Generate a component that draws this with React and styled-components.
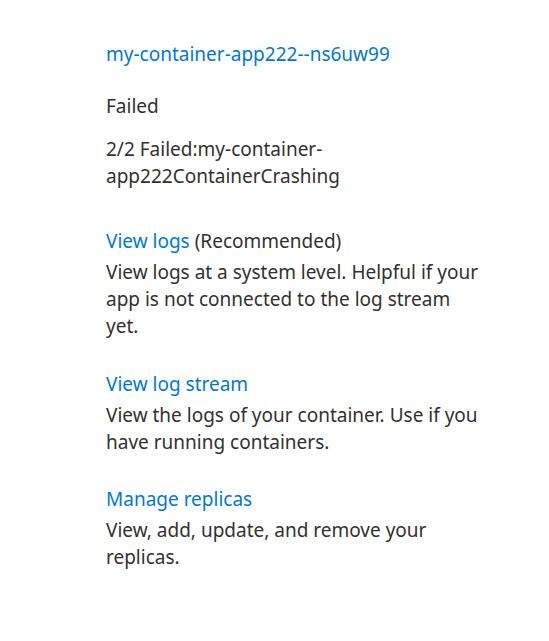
import React from "react";
import styled, { createGlobalStyle } from "styled-components";

const Global = createGlobalStyle`
  html, body { margin: 0; padding: 0; background: #ffffff; }
  body { font-family: "Noto Sans", "Open Sans", "Liberation Sans", sans-serif; }
`;

const Page = styled.div`
  padding: 41px 0 0 106px;
  width: 380px;
  color: #323130;
  font-size: 19px;
  line-height: 27px;
`;

const Link = styled.a`
  color: #0078d4;
  text-decoration: none;
  cursor: pointer;
`;

const Title = styled.div`
  margin: 0;
`;

const Status = styled.div`
  margin-top: ${(p) => p.$top}px;
`;

const Section = styled.div`
  display: flex;
  flex-direction: column;
  gap: 4px;
  margin-top: ${(p) => p.$top}px;
`;

const Heading = styled.div``;

const Desc = styled.div``;

export default function App() {
  return (
    <>
      <Global />
      <Page>
        <Title>
          <Link>my-container-app222--ns6uw99</Link>
        </Title>
        <Status $top={25}>Failed</Status>
        <Status $top={16}>2/2 Failed:my-container-app222ContainerCrashing</Status>
        <Section $top={38}>
          <Heading>
            <Link>View logs</Link> (Recommended)
          </Heading>
          <Desc>
            View logs at a system level. Helpful if your app is not connected
            to the log stream yet.
          </Desc>
        </Section>
        <Section $top={31}>
          <Heading>
            <Link>View log stream</Link>
          </Heading>
          <Desc>
            View the logs of your container. Use if you have running
            containers.
          </Desc>
        </Section>
        <Section $top={30}>
          <Heading>
            <Link>Manage replicas</Link>
          </Heading>
          <Desc>View, add, update, and remove your replicas.</Desc>
        </Section>
      </Page>
    </>
  );
}
